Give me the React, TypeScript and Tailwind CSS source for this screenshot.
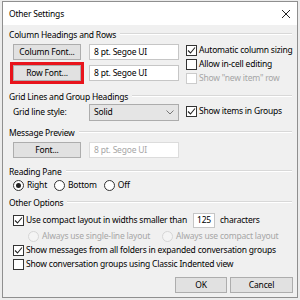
import React from "react";

const font = { fontFamily: '"Noto Sans", "Open Sans", sans-serif' };

function Check({ checked, disabled, label }: { checked?: boolean; disabled?: boolean; label: string }) {
  return (
    <div className="flex items-center h-[14px] gap-[2px] whitespace-nowrap">
      <span
        className={`w-[11px] h-[11px] shrink-0 border flex items-center justify-center bg-white ${
          disabled ? "border-[#cccccc]" : "border-[#333333]"
        }`}
      >
        {checked && (
          <svg width="9" height="9" viewBox="0 0 9 9">
            <path d="M1 4.5 L3.5 7 L8 1.5" fill="none" stroke="#222" strokeWidth="1.1" />
          </svg>
        )}
      </span>
      <span className={disabled ? "text-[#a6a6a6]" : "text-black"}>{label}</span>
    </div>
  );
}

function Radio({ checked, disabled, label }: { checked?: boolean; disabled?: boolean; label: string }) {
  return (
    <div className="flex items-center gap-[3px] whitespace-nowrap">
      <span
        className={`w-[11px] h-[11px] shrink-0 rounded-full border flex items-center justify-center ${
          disabled ? "border-[#d6d6d6] bg-[#f4f4f4]" : "border-[#333333] bg-white"
        }`}
      >
        {checked && <span className="w-[5px] h-[5px] rounded-full bg-[#222]" />}
      </span>
      <span className={disabled ? "text-[#a6a6a6]" : "text-black"}>{label}</span>
    </div>
  );
}

function Group({ title }: { title: string }) {
  return (
    <div className="flex items-center h-[14px] pl-[6px] pr-[5px] gap-[4px]">
      <span className="text-black whitespace-nowrap pt-[2px]">{title}</span>
      <div className="flex-1 border-t border-[#d8d8d8] border-b border-b-white" />
    </div>
  );
}

function Btn({ label, className = "" }: { label: string; className?: string }) {
  return (
    <div
      className={`h-[16px] bg-[#e1e1e1] border border-[#adadad] flex items-center justify-center text-black whitespace-nowrap ${className}`}
    >
      {label}
    </div>
  );
}

function Field({ value, disabled }: { value: string; disabled?: boolean }) {
  return (
    <div
      className={`h-[16px] w-[90px] bg-white border flex items-center px-[4px] whitespace-nowrap ${
        disabled ? "border-[#dcdcdc] text-[#a6a6a6]" : "border-[#c6c6c6] text-black"
      }`}
    >
      {value}
    </div>
  );
}

export default function App() {
  return (
    <div className="w-[300px] h-[300px] bg-[#ececec] p-[2px] pt-[1px]" style={font}>
      <div className="w-full h-full border border-[#8f8f8f] bg-[#f0f0f0] flex flex-col text-[8.5px] leading-none tracking-[-0.2px]">
        {/* Title bar */}
        <div className="h-[23px] bg-white flex items-center justify-between pl-[6px] pr-[6px] shrink-0">
          <span className="text-[8.5px] text-black pt-[1px]">Other Settings</span>
          <svg width="10" height="10" viewBox="0 0 10 10">
            <path d="M1 1 L9 9 M9 1 L1 9" stroke="#222" strokeWidth="1" />
          </svg>
        </div>

        <div className="pt-[2px] flex flex-col">
          <Group title="Column Headings and Rows" />
          <div className="flex pl-[10px] pt-[2px]">
            <div className="flex flex-col gap-[6px] pt-[1px]">
              <div className="flex items-center gap-[8px]">
                <Btn label="Column Font..." className="w-[68px] border-[#0078d7]" />
                <Field value="8 pt. Segoe UI" />
              </div>
              <div className="flex items-center gap-[8px] h-[14px]">
                <div className="border-[3px] border-[#e8141c] -m-[3px]">
                  <Btn label="Row Font..." className="w-[68px] h-[14px]" />
                </div>
                <Field value="8 pt. Segoe UI" />
              </div>
            </div>
            <div className="flex flex-col pl-[7px]">
              <Check checked label="Automatic column sizing" />
              <Check label="Allow in-cell editing" />
              <Check disabled label={'Show "new item" row'} />
            </div>
          </div>

          <div className="mt-[4px]">
            <Group title="Grid Lines and Group Headings" />
          </div>
          <div className="flex items-center pl-[10px] pt-[1px]">
            <span className="w-[76px]">Grid line style:</span>
            <div className="h-[17px] w-[90px] bg-[#e5e5e5] border border-[#acacac] flex items-center justify-between px-[4px]">
              <span>Solid</span>
              <svg width="8" height="5" viewBox="0 0 8 5">
                <path d="M0.5 0.5 L4 4 L7.5 0.5" fill="none" stroke="#777" strokeWidth="1" />
              </svg>
            </div>
            <div className="pl-[7px] -mt-[2px]">
              <Check checked label="Show items in Groups" />
            </div>
          </div>

          <div className="mt-[4px]">
            <Group title="Message Preview" />
          </div>
          <div className="flex items-center gap-[8px] pl-[10px] pt-[3px]">
            <Btn label="Font..." className="w-[68px]" />
            <Field value="8 pt. Segoe UI" disabled />
          </div>

          <div className="mt-[6px]">
            <Group title="Reading Pane" />
          </div>
          <div className="flex items-center h-[14px] pl-[10px] gap-[7px]">
            <Radio checked label="Right" />
            <Radio label="Bottom" />
            <Radio label="Off" />
          </div>

          <div className="mt-[3px]">
            <Group title="Other Options" />
          </div>
          <div className="flex items-center pl-[10px] mt-[4px] h-[15px] whitespace-nowrap">
            <Check checked label="Use compact layout in widths smaller than" />
            <div className="ml-[6px] h-[15px] w-[22px] bg-white border border-[#c6c6c6] flex items-center justify-center">
              125
            </div>
            <span className="ml-[5px]">characters</span>
          </div>
          <div className="flex items-center h-[14px] mt-[1px] pl-[25px] gap-[12px]">
            <Radio disabled label="Always use single-line layout" />
            <Radio disabled label="Always use compact layout" />
          </div>
          <div className="pl-[10px]">
            <Check checked label="Show messages from all folders in expanded conversation groups" />
            <Check label="Show conversation groups using Classic Indented view" />
          </div>

          <div className="flex justify-end gap-[3px] pr-[4px] pt-[6px]">
            <Btn label="OK" className="w-[52px]" />
            <Btn label="Cancel" className="w-[63px]" />
          </div>
        </div>
      </div>
    </div>
  );
}
